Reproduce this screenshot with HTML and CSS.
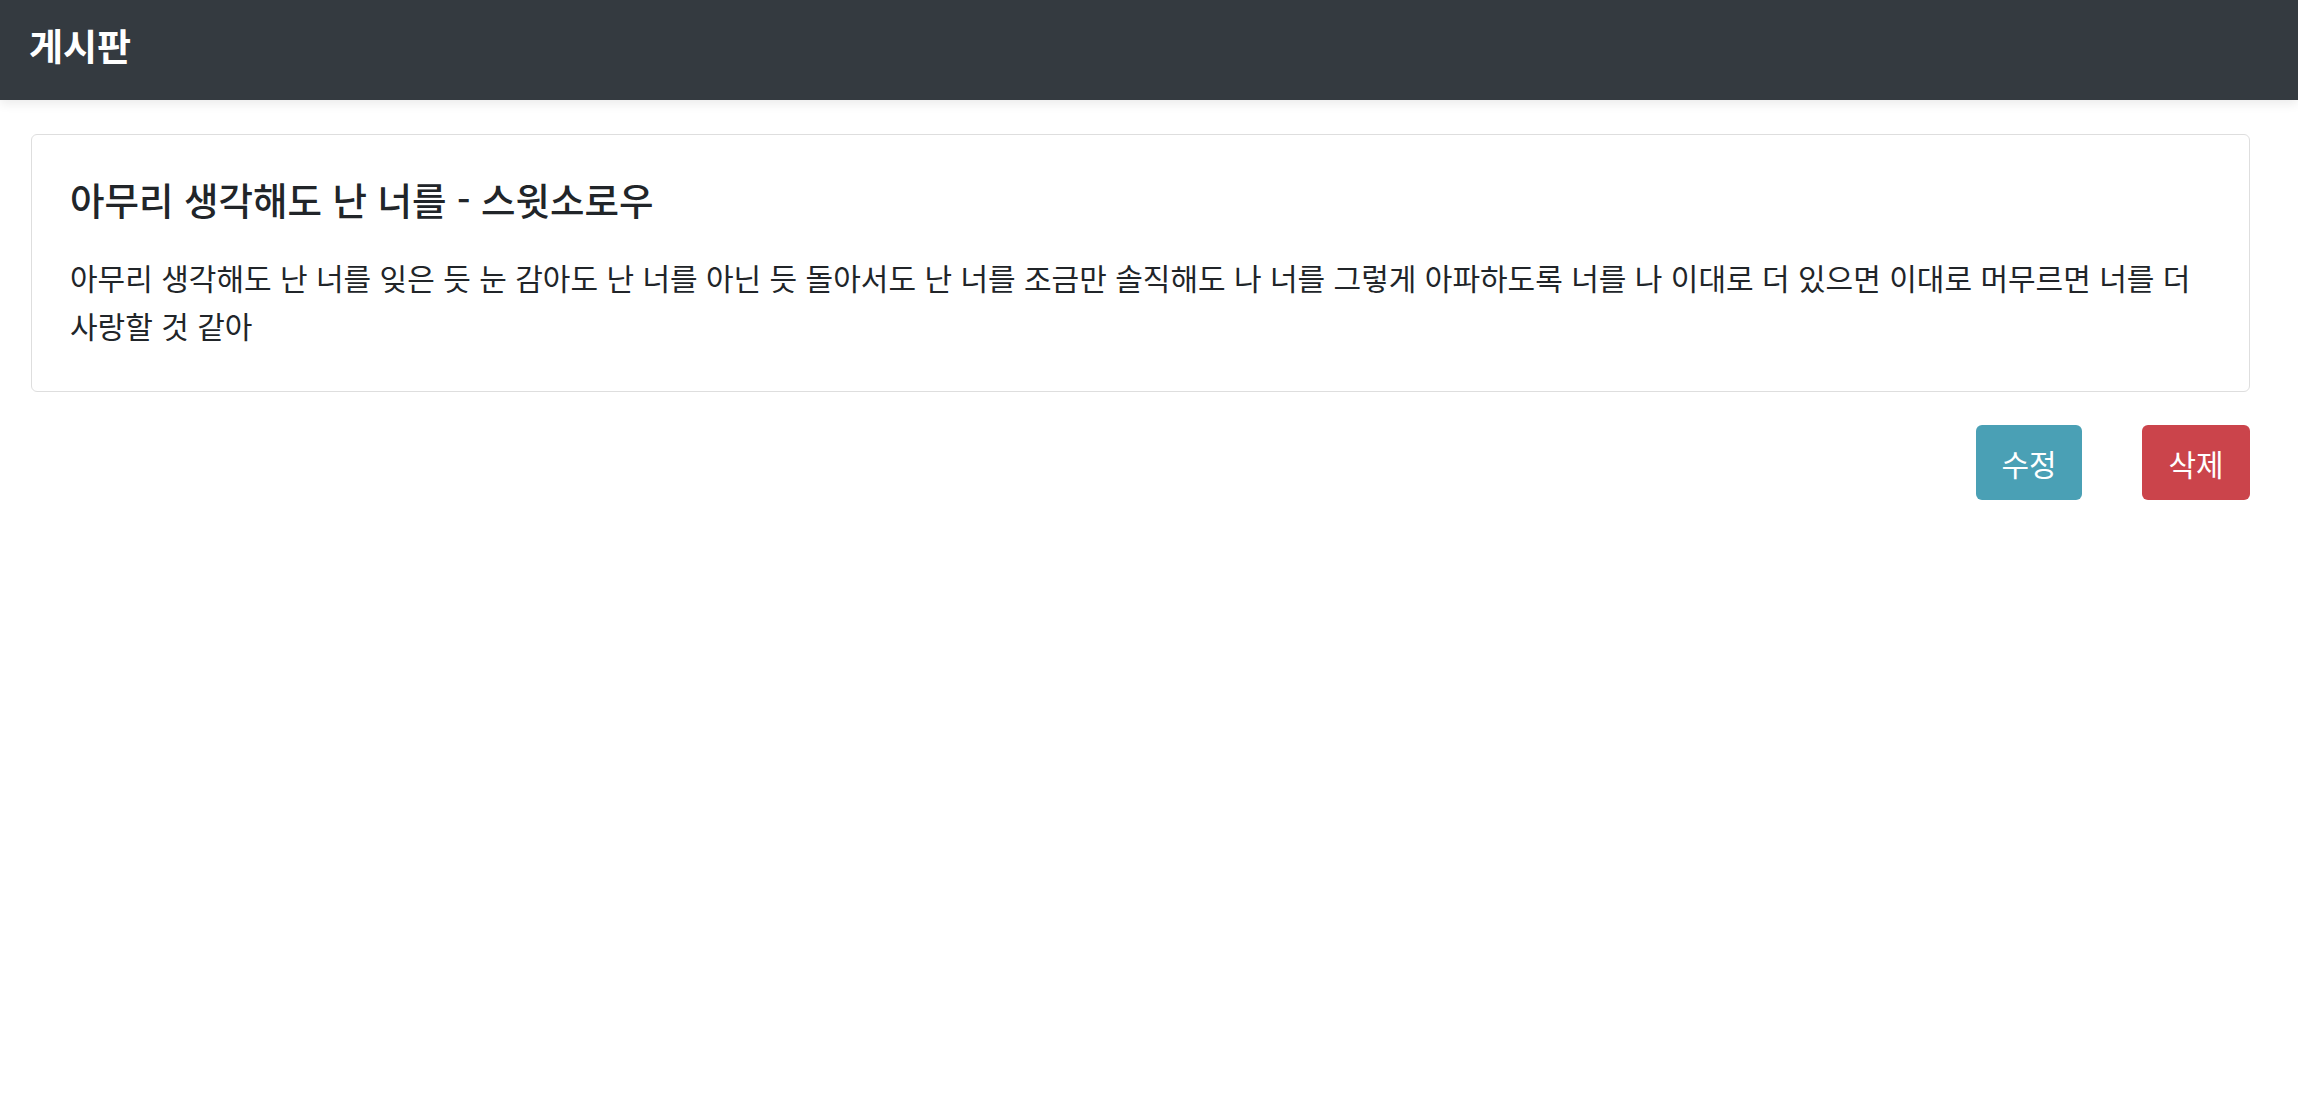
FILE: index.html
```html
<!DOCTYPE html>
<html lang="ko">
<head>
<meta charset="utf-8">
<title>게시판</title>
<link rel="stylesheet" href="styles.css">
</head>
<body>
<header class="navbar">
  <span class="brand">게시판</span>
</header>
<main class="content">
  <article class="card">
    <h2 class="card-title">아무리 생각해도 난 너를 - 스윗소로우</h2>
    <p class="card-text">아무리 생각해도 난 너를 잊은 듯 눈 감아도 난 너를 아닌 듯 돌아서도 난 너를 조금만 솔직해도 나 너를 그렇게 아파하도록 너를 나 이대로 더 있으면 이대로 머무르면 너를 더 사랑할 것 같아</p>
  </article>
  <div class="actions">
    <button class="btn btn-info">수정</button>
    <button class="btn btn-danger">삭제</button>
  </div>
</main>
</body>
</html>
```

FILE: styles.css
```css
* { box-sizing: border-box; }
html, body {
  margin: 0;
  padding: 0;
  background: #ffffff;
  font-family: "Noto Sans CJK KR", "Noto Sans", sans-serif;
  color: #212529;
}
.navbar {
  height: 100px;
  background: #343a40;
  display: flex;
  align-items: center;
  padding: 0 29px 10px;
  box-shadow: 0 4px 10px rgba(0, 0, 0, 0.08);
  position: relative;
}
.brand {
  color: #ffffff;
  font-weight: 700;
  font-size: 37px;
  line-height: 1;
}
.content {
  padding: 34px 48px 0 31px;
}
.card {
  border: 1px solid #dedede;
  border-radius: 6px;
  padding: 38px 36px 42px 38px;
}
.card-title {
  margin: 0 0 28px;
  font-size: 37.5px;
  line-height: 52px;
  font-weight: 500;
  color: #212529;
}
.card-text {
  margin: 0;
  font-size: 30px;
  line-height: 48px;
  font-weight: 400;
}
.actions {
  display: flex;
  justify-content: flex-end;
  gap: 60px;
  margin-top: 33px;
}
.btn {
  border: none;
  border-radius: 6px;
  height: 75px;
  padding: 0;
  color: #ffffff;
  font-family: "Noto Sans CJK KR", "Noto Sans", sans-serif;
  font-size: 30px;
  line-height: 1;
}
.btn-info { background: #4aa0b5; width: 106px; }
.btn-danger { background: #cb444b; width: 108px; }
```
